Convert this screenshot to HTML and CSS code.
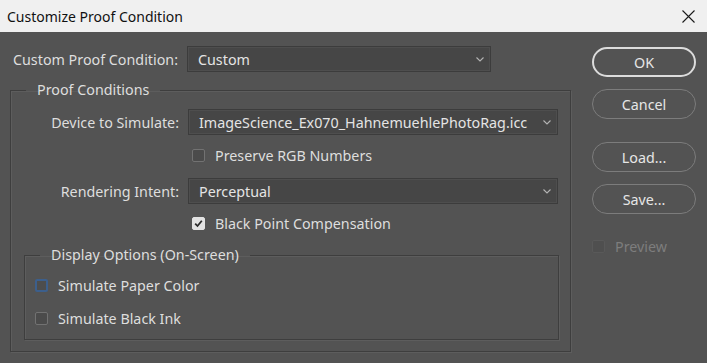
FILE: index.html
```html
<!DOCTYPE html>
<html lang="en">
<head>
    <meta charset="UTF-8">
    <title>Customize Proof Condition</title>
    <link rel="stylesheet" href="styles.css">
</head>
<body>
    <div class="titlebar">
        <span class="title">Customize Proof Condition</span>
        <svg class="close" width="13" height="13" viewBox="0 0 13 13">
            <path d="M0.5 0.5 L12.5 12.5 M12.5 0.5 L0.5 12.5" stroke="#1a1a1a" stroke-width="1.1" fill="none"/>
        </svg>
    </div>

    <div class="dialog">
        <div class="main">
            <div class="row top-row">
                <label class="label">Custom Proof Condition:</label>
                <div class="select">
                    <span>Custom</span>
                    <svg class="chevron" width="8" height="5" viewBox="0 0 8 5"><path d="M0.5 0.5 L4 4 L7.5 0.5" stroke="#b4b4b4" stroke-width="1.1" fill="none"/></svg>
                </div>
            </div>

            <fieldset class="group">
                <legend>Proof Conditions</legend>

                <div class="row device-row">
                    <label class="label">Device to Simulate:</label>
                    <div class="select wide">
                        <span>ImageScience_Ex070_HahnemuehlePhotoRag.icc</span>
                        <svg class="chevron" width="8" height="5" viewBox="0 0 8 5"><path d="M0.5 0.5 L4 4 L7.5 0.5" stroke="#b4b4b4" stroke-width="1.1" fill="none"/></svg>
                    </div>
                </div>

                <div class="row check-row preserve-row">
                    <span></span>
                    <div class="check-item indent">
                        <span class="box"></span>
                        <span>Preserve RGB Numbers</span>
                    </div>
                </div>

                <div class="row intent-row">
                    <label class="label">Rendering Intent:</label>
                    <div class="select wide">
                        <span>Perceptual</span>
                        <svg class="chevron" width="8" height="5" viewBox="0 0 8 5"><path d="M0.5 0.5 L4 4 L7.5 0.5" stroke="#b4b4b4" stroke-width="1.1" fill="none"/></svg>
                    </div>
                </div>

                <div class="row check-row bpc-row">
                    <span></span>
                    <div class="check-item indent">
                        <span class="box checked">
                            <svg width="11" height="11" viewBox="0 0 11 11"><path d="M2.2 5.6 L4.5 8 L8.8 2.8" stroke="#2a2a2a" stroke-width="1.8" fill="none"/></svg>
                        </span>
                        <span>Black Point Compensation</span>
                    </div>
                </div>

                <fieldset class="group inner">
                    <legend>Display Options (On-Screen)</legend>
                    <div class="check-item paper-row">
                        <span class="box focused"></span>
                        <span>Simulate Paper Color</span>
                    </div>
                    <div class="check-item ink-row">
                        <span class="box"></span>
                        <span>Simulate Black Ink</span>
                    </div>
                </fieldset>
            </fieldset>
        </div>

        <div class="buttons">
            <button class="btn default">OK</button>
            <button class="btn cancel">Cancel</button>
            <button class="btn load">Load...</button>
            <button class="btn save">Save...</button>
            <div class="check-item preview">
                <span class="box disabled"></span>
                <span>Preview</span>
            </div>
        </div>
    </div>
</body>
</html>
```

FILE: styles.css
```css
* {
    margin: 0;
    padding: 0;
    box-sizing: border-box;
}

body {
    width: 707px;
    height: 363px;
    overflow: hidden;
    background: #535353;
    font-family: "Noto Sans", "Open Sans", sans-serif;
    font-size: 14.3px;
    color: #dedede;
}

.titlebar {
    height: 32px;
    background: #f0f0f0;
    color: #111;
    display: flex;
    align-items: center;
    justify-content: space-between;
    padding: 0 12px 0 7px;
    font-size: 14px;
}

.dialog {
    display: flex;
    padding: 14px 0 0 10px;
    gap: 21px;
}

.main {
    width: 561px;
}

.row {
    display: grid;
    grid-template-columns: 168px 1fr;
    column-gap: 9px;
    align-items: center;
}

.top-row {
    grid-template-columns: 168px 304px;
    height: 26px;
}

.label {
    text-align: right;
    white-space: nowrap;
}

.select {
    height: 26px;
    background: #464646;
    border: 1px solid #3c3c3c;
    box-shadow: inset 0 0 0 1px #4e4e4e;
    display: flex;
    align-items: center;
    justify-content: space-between;
    padding: 0 6px 0 10px;
    color: #e4e4e4;
    white-space: nowrap;
}

.chevron {
    flex-shrink: 0;
}

.wide {
    width: 370px;
}

/* group boxes */
.group {
    border: 1px solid #3e3e3e;
    box-shadow: 1px 1px 0 #5d5d5d, inset 1px 1px 0 #5d5d5d;
    margin-top: 8px;
    padding: 0 0 11px 0;
    height: 272px;
}

.group legend {
    margin-left: 15px;
    padding: 0 11px;
    line-height: 20px;
}

.device-row {
    margin-top: 9px;
    height: 26px;
}

.preserve-row {
    margin-top: 10px;
    height: 20px;
}

.intent-row {
    margin-top: 13px;
    height: 26px;
}

.bpc-row {
    margin-top: 9px;
    height: 20px;
}

.indent {
    padding-left: 4px;
}

.check-item {
    display: flex;
    align-items: center;
    gap: 10px;
    height: 20px;
    white-space: nowrap;
}

.box {
    width: 13px;
    height: 13px;
    border: 1px solid #727272;
    border-radius: 2px;
    background: #4b4b4b;
    display: flex;
    align-items: center;
    justify-content: center;
    flex-shrink: 0;
}

.box.checked {
    background: #e2e2e2;
    border-color: #e2e2e2;
}

.box.focused {
    border: 2px solid #3c5f8c;
    background: #4d4d4d;
}

.box.disabled {
    border-color: #595959;
    background: #4f4f4f;
}

.group.inner {
    height: auto;
    margin: 12px 11px 0 13px;
    padding: 0 0 11px 10px;
}

.group.inner legend {
    margin-left: 5px;
}

.paper-row {
    margin-top: 10px;
}

.ink-row {
    margin-top: 13px;
}

/* right side buttons */
.buttons {
    display: flex;
    flex-direction: column;
    width: 104px;
    padding-top: 1px;
}

.btn {
    height: 30px;
    border-radius: 15px;
    background: transparent;
    border: 1px solid #7c7c7c;
    color: #e6e6e6;
    font-family: inherit;
    font-size: 14.3px;
}

.btn.default {
    border: 2px solid #dcdcdc;
}

.cancel,
.save {
    margin-top: 12px;
}

.load {
    margin-top: 23px;
}

.preview {
    margin-top: 22px;
    color: #7d7d7d;
}
```
